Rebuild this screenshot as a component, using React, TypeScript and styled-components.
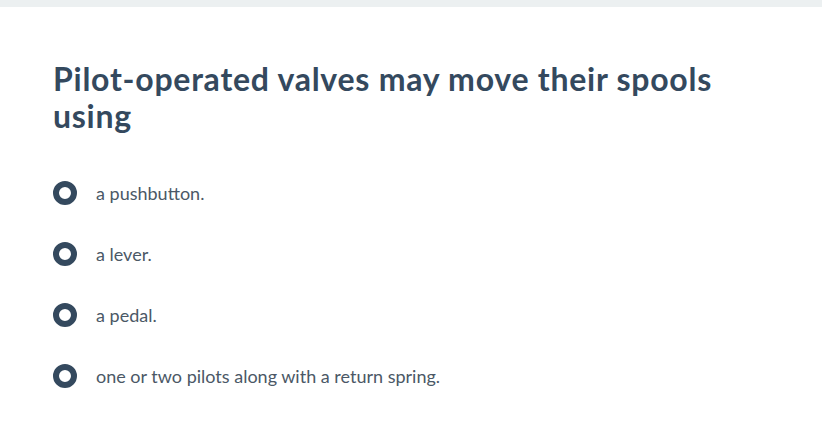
import styled, { createGlobalStyle } from "styled-components";

const GlobalStyle = createGlobalStyle`
  html, body {
    margin: 0;
    padding: 0;
    background: #ffffff;
  }
  body {
    font-family: Lato, "Open Sans", sans-serif;
  }
`;

const TopBar = styled.div`
  height: 7px;
  background-color: #ecf0f1;
`;

const Content = styled.main`
  padding: 53px 53px 0 53px;
`;

const Question = styled.h1`
  margin: 0 0 47px 0;
  max-width: 700px;
  font-size: 32px;
  line-height: 37px;
  letter-spacing: 0.75px;
  font-weight: 700;
  color: #34495e;
`;

const Options = styled.div`
  display: flex;
  flex-direction: column;
  gap: 37px;
`;

const Option = styled.label`
  display: flex;
  align-items: center;
  gap: 19px;
  cursor: pointer;
`;

const Radio = styled.span`
  box-sizing: border-box;
  width: 24px;
  height: 24px;
  border-radius: 50%;
  border: 6px solid #34495e;
  flex-shrink: 0;
`;

const OptionText = styled.span`
  font-size: 18px;
  line-height: 24px;
  color: #4b5866;
`;

const answers = [
  "a pushbutton.",
  "a lever.",
  "a pedal.",
  "one or two pilots along with a return spring.",
];

export default function App() {
  return (
    <>
      <GlobalStyle />
      <TopBar />
      <Content>
        <Question>Pilot-operated valves may move their spools using</Question>
        <Options>
          {answers.map((a) => (
            <Option key={a}>
              <Radio />
              <OptionText>{a}</OptionText>
            </Option>
          ))}
        </Options>
      </Content>
    </>
  );
}
